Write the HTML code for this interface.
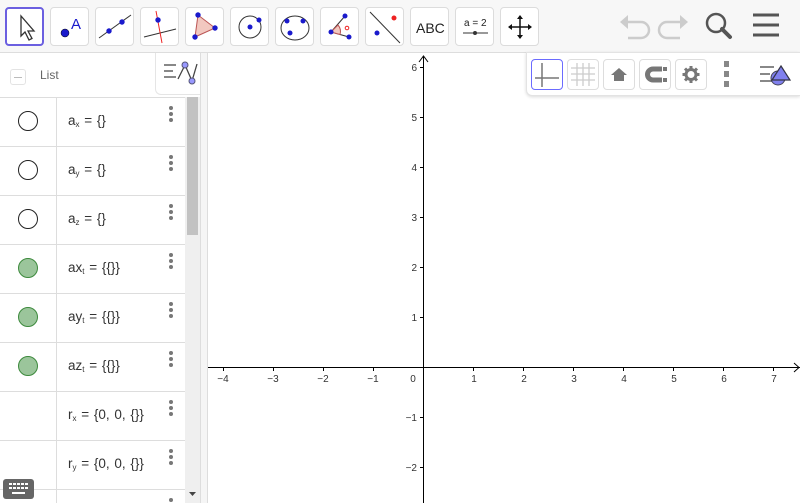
<!DOCTYPE html>
<html style="overflow:hidden;width:800px;height:503px"><head><style>
*{margin:0;padding:0;box-sizing:border-box}
body{width:800px;height:503px;overflow:hidden;background:#fff;font-family:"Liberation Sans",sans-serif;position:relative}
.tb{position:absolute;left:0;top:0;width:800px;height:53px;background:#f7f7f7;border-bottom:1px solid #ddd}
.btn{position:absolute;top:7px;width:39px;height:39px;background:#fff;border:1px solid #dcdcdc;border-radius:4px}
.btn svg{position:absolute;left:0;top:0}
.lp{position:absolute;left:0;top:53px;width:200px;height:450px;background:#fff;overflow:hidden}
.row{position:absolute;left:0;width:186px;height:49px;border-top:1px solid #ddd}
.row .div{position:absolute;left:56px;top:0;width:1px;height:49px;background:#ddd}
.row .c{position:absolute;left:18px;top:13px;width:20px;height:20px;border-radius:50%;border:1px solid #222}
.row .g{background:#9bc59b;border-color:#3d8a3d}
.row .t{position:absolute;left:68px;top:15px;font-size:13.5px;color:#333;word-spacing:1px}
.row .t sub{font-size:8px;vertical-align:-2px}
.dots{position:absolute;left:169px;top:8px;width:4px}
.dots i{display:block;width:4px;height:4px;border-radius:50%;background:#777;margin-bottom:2px}
.gb{position:absolute;top:59px;width:32px;height:31px;border:1px solid #ddd;border-radius:4px;background:#fff}
</style></head><body>
<div class="tb">
 <div class="btn" style="left:5px;border:2px solid #6b5fe0"><svg width="39" height="39"><path d="M14 7 L14 27 L18 23 L22 31 L25 29.5 L21 22 L27 22 Z" fill="#fff" stroke="#333" stroke-width="1.3"/></svg></div>
 <div class="btn" style="left:50px"><svg width="39" height="39"><circle cx="14" cy="25" r="4" fill="#1a1acc" stroke="#000" stroke-width=".5"/><text x="20" y="21" font-size="15" fill="#1a1acc" font-family="Liberation Sans">A</text></svg></div>
 <div class="btn" style="left:95px"><svg width="39" height="39"><line x1="3" y1="30" x2="35" y2="7" stroke="#333"/><circle cx="13" cy="23" r="2.7" fill="#1a1acc"/><circle cx="26" cy="14" r="2.7" fill="#1a1acc"/></svg></div>
 <div class="btn" style="left:140px"><svg width="39" height="39"><line x1="3" y1="29" x2="35" y2="21" stroke="#333"/><line x1="15" y1="3" x2="21" y2="35" stroke="#e22"/><circle cx="17" cy="12" r="2.7" fill="#1a1acc"/></svg></div>
 <div class="btn" style="left:185px"><svg width="39" height="39"><path d="M12 7 L9 29 L29 20Z" fill="#f2c8c0" stroke="#b55" /><circle cx="12" cy="7" r="2.7" fill="#1a1acc"/><circle cx="9" cy="29" r="2.7" fill="#1a1acc"/><circle cx="29" cy="20" r="2.7" fill="#1a1acc"/></svg></div>
 <div class="btn" style="left:230px"><svg width="39" height="39"><circle cx="19" cy="19" r="11" fill="none" stroke="#333"/><circle cx="19" cy="19" r="2.5" fill="#1a1acc"/><circle cx="28" cy="12" r="2.5" fill="#1a1acc"/></svg></div>
 <div class="btn" style="left:275px"><svg width="39" height="39"><ellipse cx="19" cy="20" rx="14" ry="12" fill="none" stroke="#333"/><circle cx="11" cy="13" r="2.5" fill="#1a1acc"/><circle cx="27" cy="13" r="2.5" fill="#1a1acc"/><circle cx="14" cy="25" r="2.5" fill="#1a1acc"/></svg></div>
 <div class="btn" style="left:320px"><svg width="39" height="39"><path d="M10 24 L24 8 M10 24 L28 29" stroke="#333" fill="none"/><path d="M10 24 L17 17 A10 10 0 0 1 19 26.5Z" fill="#f2c8c0" stroke="#b55"/><circle cx="26" cy="20" r="1.8" fill="none" stroke="#e22"/><circle cx="10" cy="24" r="2.5" fill="#1a1acc"/><circle cx="24" cy="8" r="2.5" fill="#1a1acc"/><circle cx="28" cy="29" r="2.5" fill="#1a1acc"/></svg></div>
 <div class="btn" style="left:365px"><svg width="39" height="39"><line x1="4" y1="4" x2="34" y2="35" stroke="#333"/><circle cx="11" cy="25" r="2.5" fill="#1a1acc"/><circle cx="28" cy="10" r="2.5" fill="#e22"/></svg></div>
 <div class="btn" style="left:410px"><svg width="39" height="39"><text x="5" y="25" font-size="14" fill="#222" font-family="Liberation Sans">ABC</text></svg></div>
 <div class="btn" style="left:455px"><svg width="39" height="39"><text x="8" y="18" font-size="10" fill="#222" font-family="Liberation Sans">a = 2</text><line x1="7" y1="25" x2="32" y2="25" stroke="#333"/><circle cx="19" cy="25" r="2" fill="#333"/></svg></div>
 <div class="btn" style="left:500px"><svg width="39" height="39"><path d="M19 8 V30 M8 19 H30" stroke="#111" stroke-width="1.5"/><path d="M19 7 l-3 4 h6z M19 31 l-3 -4 h6z M7 19 l4 -3 v6z M31 19 l-4 -3 v6z" fill="#111"/></svg></div>
 <svg style="position:absolute;left:615px;top:10px" width="185" height="35"><path d="M10 12 H26 A8 8 0 0 1 26 28 H13" fill="none" stroke="#ccc" stroke-width="2.5"/><path d="M5 12 L13 5 V19Z" fill="#ccc"/><path d="M68 12 H52 A8 8 0 0 0 52 28 H65" fill="none" stroke="#ccc" stroke-width="2.5"/><path d="M73 12 L65 5 V19Z" fill="#ccc"/><circle cx="101" cy="13" r="9" fill="none" stroke="#555" stroke-width="2.5"/><path d="M107 19 L115 27" stroke="#555" stroke-width="4" stroke-linecap="round"/><path d="M138 5 H164 M138 15 H164 M138 25 H164" stroke="#555" stroke-width="3"/></svg>
</div>
<div class="lp">
 <div style="position:absolute;left:10px;top:16px;width:16px;height:16px;border:1px solid #e3e3e3;border-radius:3px"><div style="position:absolute;left:3px;top:7px;width:8px;height:1px;background:#bbb"></div></div>
 <div style="position:absolute;left:40px;top:15px;font-size:12px;color:#666">List</div>
 <div style="position:absolute;left:155px;top:0;width:45px;height:42px;border:1px solid #e5e5e5;border-top:none;border-right:none;border-radius:0 0 0 6px;background:#fff"><svg width="45" height="42"><path d="M8 12 H20 M8 18 H17 M8 24 H20" stroke="#888" stroke-width="2"/><path d="M22 26 L29 12 L36 28 L41 11" fill="none" stroke="#444" stroke-width="1.3"/><circle cx="29" cy="12" r="3" fill="#99f" stroke="#557"/><circle cx="36" cy="28" r="3" fill="#99f" stroke="#557"/></svg></div>
 <div class="row" style="top:44px"><div class="div"></div><div class="c"></div><div class="t">a<sub>x</sub> = {}</div><div class="dots"><i></i><i></i><i></i></div></div>
 <div class="row" style="top:93px"><div class="div"></div><div class="c"></div><div class="t">a<sub>y</sub> = {}</div><div class="dots"><i></i><i></i><i></i></div></div>
 <div class="row" style="top:142px"><div class="div"></div><div class="c"></div><div class="t">a<sub>z</sub> = {}</div><div class="dots"><i></i><i></i><i></i></div></div>
 <div class="row" style="top:191px"><div class="div"></div><div class="c g"></div><div class="t">ax<sub>t</sub> = {{}}</div><div class="dots"><i></i><i></i><i></i></div></div>
 <div class="row" style="top:240px"><div class="div"></div><div class="c g"></div><div class="t">ay<sub>t</sub> = {{}}</div><div class="dots"><i></i><i></i><i></i></div></div>
 <div class="row" style="top:289px"><div class="div"></div><div class="c g"></div><div class="t">az<sub>t</sub> = {{}}</div><div class="dots"><i></i><i></i><i></i></div></div>
 <div class="row" style="top:338px"><div class="div"></div><div class="t">r<sub>x</sub> = {0, 0, {}}</div><div class="dots"><i></i><i></i><i></i></div></div>
 <div class="row" style="top:387px"><div class="div"></div><div class="t">r<sub>y</sub> = {0, 0, {}}</div><div class="dots"><i></i><i></i><i></i></div></div>
 <div class="row" style="top:436px;height:14px"><div class="div" style="height:14px"></div><div class="dots"><i></i></div></div>
 <div style="position:absolute;left:185px;top:44px;width:15px;height:406px;background:#efefef"></div>
 <div style="position:absolute;left:187px;top:44px;width:11px;height:138px;background:#c2c2c2"></div>
 <svg style="position:absolute;left:185px;top:436px" width="15" height="10"><path d="M4 3 H11 L7.5 7Z" fill="#444"/></svg>
 <div style="position:absolute;left:3px;top:426px;width:31px;height:20px;background:#666;border-radius:3px"><svg width="31" height="20"><g fill="#fff"><rect x="6" y="4" width="3" height="2"/><rect x="10" y="4" width="3" height="2"/><rect x="14" y="4" width="3" height="2"/><rect x="18" y="4" width="3" height="2"/><rect x="22" y="4" width="3" height="2"/><rect x="6" y="8" width="3" height="2"/><rect x="10" y="8" width="3" height="2"/><rect x="14" y="8" width="3" height="2"/><rect x="18" y="8" width="3" height="2"/><rect x="22" y="8" width="3" height="2"/><rect x="9" y="13" width="13" height="2"/></g></svg></div>
</div>
<div style="position:absolute;left:200px;top:53px;width:8px;height:450px;background:#f5f5f5;border-left:1px solid #ddd;border-right:1px solid #ddd"></div>
<svg style="position:absolute;left:208px;top:53px" width="592" height="450" font-family="Liberation Sans" font-size="10" fill="#333">
 <line x1="0" y1="314.5" x2="592" y2="314.5" stroke="#000"/>
 <line x1="215.5" y1="4" x2="215.5" y2="450" stroke="#000"/>
 <path d="M211 9 L215.5 3 L220 9" fill="none" stroke="#000"/>
 <path d="M586 310 L591 314.5 L586 319" fill="none" stroke="#000"/>
 <g stroke="#000">
  <line x1="15.5" y1="314" x2="15.5" y2="318"/><line x1="65.5" y1="314" x2="65.5" y2="318"/><line x1="115.5" y1="314" x2="115.5" y2="318"/><line x1="165.5" y1="314" x2="165.5" y2="318"/><line x1="265.5" y1="314" x2="265.5" y2="318"/><line x1="315.5" y1="314" x2="315.5" y2="318"/><line x1="365.5" y1="314" x2="365.5" y2="318"/><line x1="415.5" y1="314" x2="415.5" y2="318"/><line x1="465.5" y1="314" x2="465.5" y2="318"/><line x1="515.5" y1="314" x2="515.5" y2="318"/><line x1="565.5" y1="314" x2="565.5" y2="318"/>
  <line x1="212" y1="14.5" x2="216" y2="14.5"/><line x1="212" y1="64.5" x2="216" y2="64.5"/><line x1="212" y1="114.5" x2="216" y2="114.5"/><line x1="212" y1="164.5" x2="216" y2="164.5"/><line x1="212" y1="214.5" x2="216" y2="214.5"/><line x1="212" y1="264.5" x2="216" y2="264.5"/><line x1="212" y1="364.5" x2="216" y2="364.5"/><line x1="212" y1="414.5" x2="216" y2="414.5"/>
 </g>
 <g text-anchor="middle">
  <text x="15" y="329">−4</text><text x="65" y="329">−3</text><text x="115" y="329">−2</text><text x="165" y="329">−1</text><text x="205" y="329">0</text>
  <text x="266" y="329">1</text><text x="316" y="329">2</text><text x="366" y="329">3</text><text x="416" y="329">4</text><text x="466" y="329">5</text><text x="516" y="329">6</text><text x="566" y="329">7</text>
 </g>
 <g text-anchor="end">
  <text x="209" y="18">6</text><text x="209" y="68">5</text><text x="209" y="118">4</text><text x="209" y="168">3</text><text x="209" y="218">2</text><text x="209" y="268">1</text><text x="209" y="368">−1</text><text x="209" y="418">−2</text>
 </g>
</svg>
<div style="position:absolute;left:526px;top:52px;width:274px;height:44px;background:#fff;border:1px solid #e3e3e3;border-right:none;border-radius:0 0 0 6px;box-shadow:0 1px 3px rgba(0,0,0,.15)"></div>
<div class="gb" style="left:531px;border-color:#6b6bff"><svg width="30" height="29"><path d="M10 3 V27 M3 18 H27" stroke="#777" stroke-width="1.5"/></svg></div>
<div class="gb" style="left:567px"><svg width="30" height="29"><path d="M9 3 V26 M15 3 V26 M21 3 V26 M3 8 H27 M3 14 H27 M3 20 H27" stroke="#ccc" stroke-width="1.3"/></svg></div>
<div class="gb" style="left:603px"><svg width="30" height="29"><path d="M15 8 L7 15 H10 V21 H20 V15 H23Z" fill="#777"/></svg></div>
<div class="gb" style="left:639px"><svg width="30" height="29"><path d="M22 9 H13 A5.5 5.5 0 0 0 13 20 H22" fill="none" stroke="#777" stroke-width="5"/><path d="M23 7 h4 v4 h-4z M23 18 h4 v4 h-4z" fill="#777"/></svg></div>
<div class="gb" style="left:675px"><svg width="30" height="29"><circle cx="15" cy="14.5" r="5" fill="none" stroke="#777" stroke-width="3"/><path d="M15 6 V9 M15 20 V23 M6.5 14.5 H9.5 M20.5 14.5 H23.5 M9 8.5 L11 10.5 M19 18.5 L21 20.5 M9 20.5 L11 18.5 M19 10.5 L21 8.5" stroke="#777" stroke-width="3"/></svg></div>
<svg style="position:absolute;left:722px;top:60px" width="10" height="30"><rect x="2" y="1" width="5" height="6" fill="#888"/><rect x="2" y="11" width="5" height="6" fill="#888"/><rect x="2" y="21" width="5" height="6" fill="#888"/></svg>
<svg style="position:absolute;left:758px;top:60px" width="36" height="30"><path d="M2 7 H16 M2 14 H12 M2 21 H14" stroke="#888" stroke-width="2"/><circle cx="20" cy="18" r="7" fill="#8080ee" stroke="#445"/><path d="M23 6 L32 20 H14Z" fill="#8080ee" stroke="#334" stroke-width="1.2"/></svg>
</body></html>
